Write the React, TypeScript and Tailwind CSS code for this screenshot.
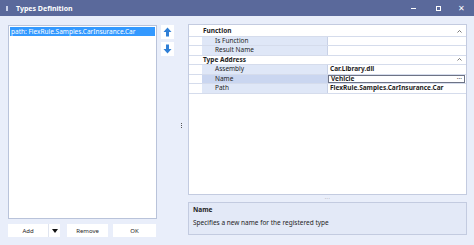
import React from 'react';

const font = { fontFamily: '"Noto Sans", "Open Sans", sans-serif' };

type Row = { label: string; value?: string; selected?: boolean };

const sections: { title: string; rows: Row[] }[] = [
  { title: 'Function', rows: [{ label: 'Is Function' }, { label: 'Result Name' }] },
  {
    title: 'Type Address',
    rows: [
      { label: 'Assembly', value: 'Car.Library.dll' },
      { label: 'Name', value: 'Vehicle', selected: true },
      { label: 'Path', value: 'FlexRule.Samples.CarInsurance.Car' },
    ],
  },
];

const ArrowUp = () => (
  <svg width="9" height="10" viewBox="0 0 9 10">
    <path d="M4.5 0.5 L8.5 5 L6 5 L6 9.5 L3 9.5 L3 5 L0.5 5 Z" fill="#2f7fd6" />
  </svg>
);

const ArrowDown = () => (
  <svg width="9" height="10" viewBox="0 0 9 10">
    <path d="M4.5 9.5 L8.5 5 L6 5 L6 0.5 L3 0.5 L3 5 L0.5 5 Z" fill="#2f7fd6" />
  </svg>
);

const Caret = () => (
  <svg width="5" height="3" viewBox="0 0 5 3">
    <path d="M0.5 2.5 L2.5 0.5 L4.5 2.5" fill="none" stroke="#555" strokeWidth="0.8" />
  </svg>
);

export default function App() {
  return (
    <div className="w-[474px] h-[245px] bg-[#e9eefa] flex flex-col overflow-hidden text-[#1e1e1e]" style={font}>
      {/* Title bar */}
      <div className="h-[16px] bg-[#5a699b] flex items-center text-white">
        <div className="w-[2px] h-[5px] bg-[#c8d0e8] ml-[6px] mr-[8px]" />
        <span className="text-[7px] font-bold leading-none">Types Definition</span>
        <div className="ml-auto flex items-center">
          <div className="w-[5px] h-[1px] bg-white mr-[20px]" />
          <div className="w-[5px] h-[5px] border border-white mr-[17px]" />
          <span className="text-[8px] leading-none mr-[9px]">✕</span>
        </div>
      </div>

      <div className="flex-1 flex pl-[8px] pt-[9px]">
        {/* Left list column */}
        <div className="w-[149px] flex flex-col">
          <div className="h-[194px] bg-white border border-[#b9c3da] p-[1px]">
            <div className="h-[9px] bg-[#3399ff] text-white text-[6.5px] leading-[9px] pl-[1px] whitespace-nowrap">
              path: FlexRule.Samples.CarInsurance.Car
            </div>
          </div>
          <div className="flex mt-[5px] h-[13px] text-[6px] leading-none">
            <div className="w-[40px] bg-white flex items-center justify-center">Add</div>
            <div className="w-[12px] bg-white border-l border-[#e0e5f0] flex items-center justify-center">
              <svg width="6" height="4" viewBox="0 0 6 4">
                <path d="M0 0 L6 0 L3 4 Z" fill="#111" />
              </svg>
            </div>
            <div className="w-[41px] ml-[7px] bg-white flex items-center justify-center">Remove</div>
            <div className="w-[43px] ml-[5px] bg-white flex items-center justify-center">OK</div>
          </div>
        </div>

        {/* Up / Down */}
        <div className="ml-[4px] w-[13px] flex flex-col gap-[3px]">
          <div className="h-[14px] bg-white flex items-center justify-center">
            <ArrowUp />
          </div>
          <div className="h-[14px] bg-white flex items-center justify-center">
            <ArrowDown />
          </div>
        </div>

        {/* Splitter */}
        <div className="w-[14px] flex items-center justify-center pb-[20px]">
          <div className="flex flex-col gap-[1px]">
            <div className="w-[1px] h-[1px] bg-[#555]" />
            <div className="w-[1px] h-[1px] bg-[#555]" />
            <div className="w-[1px] h-[1px] bg-[#555]" />
          </div>
        </div>

        {/* Right panel */}
        <div className="w-[279px] flex flex-col -mt-[1px]">
          <div className="h-[171px] bg-white border border-[#c3cbe0] pt-[2px] text-[6.5px]">
            {sections.map((s) => (
              <div key={s.title}>
                <div className="h-[9.5px] flex items-center border-b border-[#d5dcec]">
                  <span className="ml-[14px] font-bold leading-none">{s.title}</span>
                  <span className="ml-auto mr-[4px] flex">
                    <Caret />
                  </span>
                </div>
                {s.rows.map((r) => (
                  <div key={r.label} className="h-[9.5px] flex border-b border-[#d5dcec]">
                    <div className="w-[13px]" />
                    <div
                      className={`w-[126px] flex items-center pl-[13px] leading-none border-r border-[#c8d1e6] ${
                        r.selected ? 'bg-[#cad6f0]' : 'bg-[#dfe7f7]'
                      }`}
                    >
                      {r.label}
                    </div>
                    <div
                      className={`flex-1 flex items-center pl-[2px] font-bold leading-none whitespace-nowrap ${
                        r.selected ? 'border border-[#6d7386] mr-[1px]' : ''
                      }`}
                    >
                      {r.value}
                      {r.selected && <span className="ml-auto mr-[2px] font-normal text-[#555]">···</span>}
                    </div>
                  </div>
                ))}
              </div>
            ))}
          </div>
          <div className="h-[7px] flex items-center justify-center">
            <span className="text-[5px] leading-none text-[#777] tracking-[0.5px]">···</span>
          </div>
          <div className="h-[33px] bg-[#e3e9f7] border border-[#c3cbe0] px-[4px] pt-[4px] text-[6.5px] leading-none">
            <div className="font-bold">Name</div>
            <div className="mt-[6px]">Specifies a new name for the registered type</div>
          </div>
        </div>
      </div>
    </div>
  );
}
